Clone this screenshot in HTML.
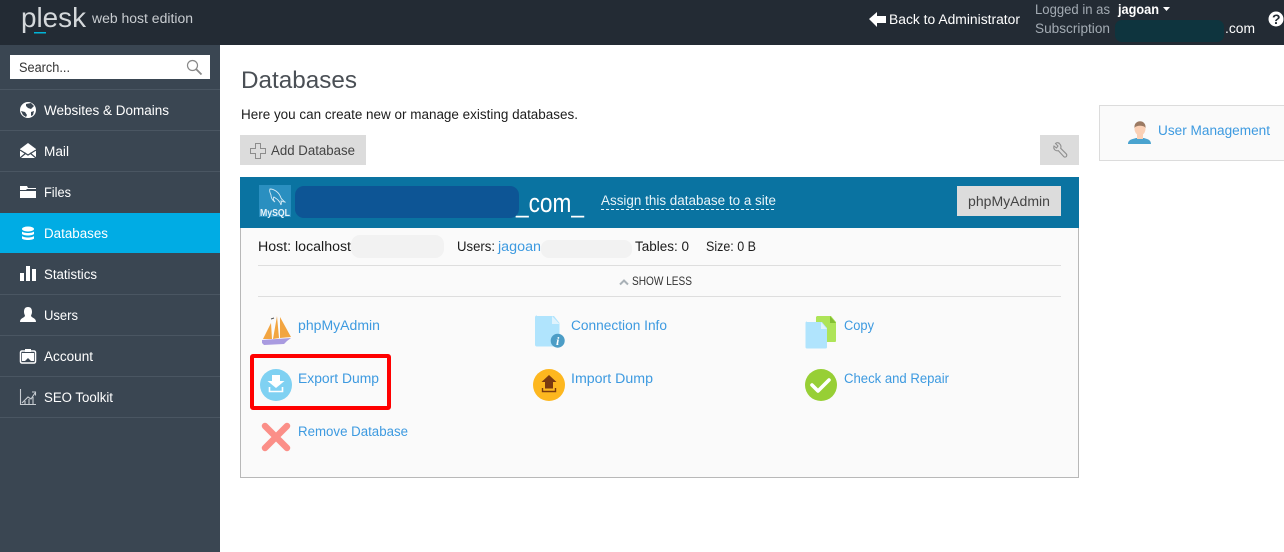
<!DOCTYPE html>
<html><head><meta charset="utf-8"><title>Databases</title>
<style>
html,body{margin:0;padding:0;background:#fff;width:1284px;height:552px;overflow:hidden}
svg{display:block}
text{font-family:"Liberation Sans",sans-serif;font-size:13.5px}
.n{fill:#fff}
.l{fill:#3d9ae0}
.d{fill:#1c1c1c}
</style></head><body>
<svg width="1284" height="552" viewBox="0 0 1284 552" xmlns="http://www.w3.org/2000/svg">
<rect width="1284" height="552" fill="#fff"/>
<!-- header -->
<rect width="1284" height="45" fill="#232b34"/>
<text x="21" y="27" style="font-size:28px" fill="#d4d8db" textLength="65" lengthAdjust="spacingAndGlyphs">plesk</text>
<rect x="34" y="32" width="12" height="1.500" fill="#00b4d8"/>
<text x="92" y="23" fill="#c9cdd1" textLength="101" lengthAdjust="spacingAndGlyphs">web host edition</text>
<path d="M869 19l8-7v4h9v7h-9v4z" fill="#fff"/>
<text x="889" y="24" class="n" textLength="131" lengthAdjust="spacingAndGlyphs">Back to Administrator</text>
<text x="1035" y="14" fill="#a3abb3" textLength="75" lengthAdjust="spacingAndGlyphs">Logged in as</text>
<text x="1118" y="14" class="n" font-weight="bold" textLength="41" lengthAdjust="spacingAndGlyphs">jagoan</text>
<path d="M1163 7h7l-3.500 4z" fill="#fff"/>
<text x="1035" y="33" fill="#a3abb3" textLength="75" lengthAdjust="spacingAndGlyphs">Subscription</text>
<rect x="1115" y="20" width="109" height="22" rx="7" fill="#0e343e"/>
<text x="1225" y="33" class="n" textLength="30" lengthAdjust="spacingAndGlyphs">.com</text>
<circle cx="1276" cy="19" r="7.500" fill="#fff"/>
<text x="1272" y="24" style="font-size:14px" font-weight="bold" fill="#232b34">?</text>
<!-- sidebar -->
<rect y="45" width="220" height="507" fill="#3a4652"/>
<rect x="10" y="55" width="200" height="24" fill="#fff"/>
<text x="19" y="72" fill="#333" textLength="51" lengthAdjust="spacingAndGlyphs">Search...</text>
<circle cx="192.500" cy="65.500" r="5" fill="none" stroke="#888" stroke-width="1.200"/>
<path d="M196 69l5.500 5.500" stroke="#888" stroke-width="1.800"/>
<g fill="#4a5662">
<rect y="89" width="220" height="1"/><rect y="130" width="220" height="1"/><rect y="171" width="220" height="1"/><rect y="294" width="220" height="1"/><rect y="335" width="220" height="1"/><rect y="376" width="220" height="1"/><rect y="417" width="220" height="1"/>
</g>
<rect y="213" width="220" height="40" fill="#00ace4"/>
<text x="44" y="115" class="n" textLength="125" lengthAdjust="spacingAndGlyphs">Websites &amp; Domains</text>
<text x="44" y="156" class="n" textLength="25" lengthAdjust="spacingAndGlyphs">Mail</text>
<text x="44" y="197" class="n" textLength="27" lengthAdjust="spacingAndGlyphs">Files</text>
<text x="44" y="238" class="n" textLength="64" lengthAdjust="spacingAndGlyphs">Databases</text>
<text x="44" y="279" class="n" textLength="53" lengthAdjust="spacingAndGlyphs">Statistics</text>
<text x="44" y="320" class="n" textLength="34" lengthAdjust="spacingAndGlyphs">Users</text>
<text x="44" y="361" class="n" textLength="49" lengthAdjust="spacingAndGlyphs">Account</text>
<text x="44" y="402" class="n" textLength="69" lengthAdjust="spacingAndGlyphs">SEO Toolkit</text>
<!-- sidebar icons -->
<circle cx="28" cy="110" r="8" fill="#fff"/>
<path d="M26 104l5-1 3 3-3 3-3-1-2-2zM21 111l4 1 2 3-1 2-3-2zM31 112l3-1-1 4-2 1z" fill="#3a4652"/>
<path d="M20 149l8-6 8 6v9H20z" fill="#fff"/>
<path d="M20 150l8 5 8-5M20 158l6-5M36 158l-6-5" fill="none" stroke="#3a4652" stroke-width="1.200"/>
<path d="M20 186h7l1 2h8v1H27l-1 1h-6zM20 191h16v7H20z" fill="#fff"/>
<ellipse cx="28" cy="229" rx="6" ry="2.500" fill="#fff"/>
<path d="M22 231.500c2 2 10 2 12 0v2.500c-2 2-10 2-12 0zM22 236c2 2 10 2 12 0v2.500c-1 2-11 2-12 0z" fill="#fff"/>
<path d="M20 273h4v8h-4zM26 266h4v15h-4zM32 269h4v12h-4z" fill="#fff"/>
<path d="M28 307c3 0 4 2 4 5 0 2-1 3-1 4 1 2 5 2 5 6H20c0-4 4-4 5-6 0-1-1-2-1-4 0-3 1-5 4-5z" fill="#fff"/>
<rect x="20.500" y="351" width="15" height="12" rx="1.500" fill="none" stroke="#fff" stroke-width="1.500"/>
<path d="M25 349h6v3h-6zM22 353h12v8h-3l-3-3-3 3h-3z" fill="#fff"/>
<path d="M20.500 389v15.500H36M22 403l6-6 3 2 4-6M32 392h3.500v3.500M25 404v-3M29 404v-5M33 404v-7" fill="none" stroke="#c8cdd2" stroke-width="1.100"/>
<!-- content -->
<text x="241" y="88" fill="#4a4f55" style="font-size:24.500px" textLength="116" lengthAdjust="spacingAndGlyphs">Databases</text>
<text x="241" y="119" class="d" textLength="337" lengthAdjust="spacingAndGlyphs">Here you can create new or manage existing databases.</text>
<rect x="240" y="135" width="126" height="30" fill="#dcdcdc"/>
<path d="M255.500 143.500h5v5h5v5h-5v5h-5v-5h-5v-5h5z" fill="none" stroke="#8c8c8c"/>
<text x="271" y="155" fill="#444" textLength="84" lengthAdjust="spacingAndGlyphs">Add Database</text>
<rect x="1040" y="135" width="39" height="30" fill="#dcdcdc"/>
<path transform="translate(5 0)" d="M1054 143c-1.500-.5-3 0-3.500.5l2.500 2.500-1.500 2-2.500-2c-.5 1.500 0 3 1 4 1 .8 2 1 3.300.6l5.500 6c1 1 2.500.2 2.700-.3.500-1 .2-2-.3-2.500l-5.500-5.500c.5-1.500.2-3-.7-4-.3-.4-.6-.6-1-.8z" fill="none" stroke="#8f8f8f" stroke-width="1.100"/>
<!-- db panel -->
<rect x="240.500" y="200" width="838" height="277.500" fill="#fafafa" stroke="#b8b8b8"/>
<rect x="240" y="177" width="839" height="51" fill="#0a73a1"/>
<rect x="259" y="185" width="32" height="32" fill="#2a8fc0"/>
<path d="M270 189c4 0 9 3 11 9 1 2 3 3 4 4-2 0-3-1-4-1 1 2 0 3 0 4-1-4-4-6-7-8-1 0-1 3 1 5-3-2-4-5-4-7-1-2-2-4-1-6z" fill="none" stroke="#d5eaf4" stroke-width=".9"/>
<text x="260" y="216" fill="#e6f3f9" font-weight="bold" style="font-size:10.500px" textLength="30" lengthAdjust="spacingAndGlyphs">MySQL</text>
<text x="516" y="212" class="n" style="font-size:27px" textLength="68" lengthAdjust="spacingAndGlyphs">_com_</text>
<rect x="295" y="186" width="224" height="32" rx="9" fill="#0d5595"/>
<text x="601" y="205" fill="#e8f4f9" textLength="175" lengthAdjust="spacingAndGlyphs">Assign this database to a site</text>
<path d="M601 209.500h175" stroke="#e8f4f9" stroke-dasharray="3 2"/>
<rect x="957" y="186" width="104" height="30" fill="#dcdcdc"/>
<text x="968" y="206" fill="#444" textLength="82" lengthAdjust="spacingAndGlyphs">phpMyAdmin</text>
<text x="258" y="251" class="d" textLength="93" lengthAdjust="spacingAndGlyphs">Host: localhost</text>
<rect x="351" y="235" width="93" height="23" rx="9" fill="#f2f2f2"/>
<text x="457" y="251" class="d" textLength="38" lengthAdjust="spacingAndGlyphs">Users:</text>
<text x="498" y="251" class="l" textLength="43" lengthAdjust="spacingAndGlyphs">jagoan</text>
<rect x="541" y="240" width="91" height="18" rx="8" fill="#f2f2f2"/>
<text x="635" y="251" class="d" textLength="54" lengthAdjust="spacingAndGlyphs">Tables: 0</text>
<text x="706" y="251" class="d" textLength="50" lengthAdjust="spacingAndGlyphs">Size: 0 B</text>
<rect x="258" y="265" width="803" height="1" fill="#dedede"/>
<rect x="258" y="296" width="803" height="1" fill="#dedede"/>
<path d="M620 284.500l4-4 4 4" fill="none" stroke="#a9b1b7" stroke-width="2"/>
<text x="632" y="285" fill="#333" style="font-size:12px" textLength="60" lengthAdjust="spacingAndGlyphs">SHOW LESS</text>
<!-- action links -->
<text x="298" y="330" class="l" textLength="82" lengthAdjust="spacingAndGlyphs">phpMyAdmin</text>
<text x="298" y="383" class="l" textLength="81" lengthAdjust="spacingAndGlyphs">Export Dump</text>
<text x="298" y="436" class="l" textLength="110" lengthAdjust="spacingAndGlyphs">Remove Database</text>
<text x="571" y="330" class="l" textLength="96" lengthAdjust="spacingAndGlyphs">Connection Info</text>
<text x="571" y="383" class="l" textLength="82" lengthAdjust="spacingAndGlyphs">Import Dump</text>
<text x="844" y="330" class="l" textLength="30" lengthAdjust="spacingAndGlyphs">Copy</text>
<text x="844" y="383" class="l" textLength="105" lengthAdjust="spacingAndGlyphs">Check and Repair</text>
<!-- phpMyAdmin sails -->
<path d="M263 339L271 323 272 339zM273 339L277 316 279 338zM280 317L291 337 280 338z" fill="#f2a541"/>
<path d="M262 340l29-2-4 3-3 3-20 1-2-2z" fill="#a99be0"/>
<path d="M271 319l3-1" stroke="#555"/>
<!-- export -->
<circle cx="276" cy="385" r="16" fill="#7fd1f2"/>
<path d="M272 375h8v6h4.500l-8.500 7-8.500-7h4.500z" fill="#fff"/>
<path d="M269.500 387v4.500h13v-4.500" fill="none" stroke="#fff" stroke-width="1.600"/>
<rect x="252" y="356" width="137" height="52" rx="1" fill="none" stroke="#f00" stroke-width="4"/>
<!-- remove -->
<path d="M265 426l22 22M287 426l-22 22" stroke="#fb8f88" stroke-width="6.500" stroke-linecap="round"/>
<!-- conn info -->
<path d="M537 316h17l5.500 7v22a1.500 1.500 0 0 1-1.500 1.500H537a2 2 0 0 1-2-2v-27a2 2 0 0 1 2-2z" fill="#b0e4fd"/>
<path d="M552 316l7.500 8h-7.500z" fill="#dff3fd"/>
<circle cx="557.700" cy="340.700" r="7" fill="#4c9dc6"/>
<text x="556" y="345" class="n" style="font-size:12px;font-style:italic;font-family:'Liberation Serif',serif" font-weight="bold">i</text>
<!-- import -->
<circle cx="549" cy="385" r="16" fill="#fdb71f"/>
<path d="M549 375l7.500 7h-3.500v6.500h-8v-6.500h-3.500z" fill="#7a3a10"/>
<path d="M542.500 388v3.500h13v-3.500" fill="none" stroke="#7a3a10" stroke-width="1.400"/>
<!-- copy -->
<path d="M817 316h14l5 6v19a1 1 0 0 1-1 1h-18a1 1 0 0 1-1-1v-24z" fill="#aee458"/>
<path d="M830 316l6 7h-6z" fill="#83bf33"/>
<path d="M807 322h15l5 6v19a1.500 1.500 0 0 1-1.500 1.500H807a1.500 1.500 0 0 1-1.500-1.500v-24a1.500 1.500 0 0 1 1.500-1.500z" fill="#b0e4fd"/>
<path d="M821 322l6 7h-6z" fill="#dff3fd"/>
<!-- check -->
<circle cx="821" cy="385" r="16" fill="#97cf35"/>
<path d="M812 385l6 6 11-11" fill="none" stroke="#fff" stroke-width="3.600" stroke-linecap="round" stroke-linejoin="round"/>
<!-- user mgmt -->
<rect x="1099.500" y="105.500" width="190" height="55" fill="#fafafa" stroke="#dcdcdc"/>
<path d="M1128 144c0-5 6-5 8-6h8c2 1 7 1 7 6z" fill="#4aa3cf"/>
<ellipse cx="1140" cy="128.500" rx="5.500" ry="7" fill="#fbd0b5"/>
<path d="M1134.500 128c-1-9 12-9 11 0-1-3-10-3-11 0z" fill="#9b7a63"/>
<rect x="1137" y="134" width="6" height="5" fill="#fbd0b5"/>
<text x="1158" y="135" class="l" textLength="112" lengthAdjust="spacingAndGlyphs">User Management</text>
</svg>
</body></html>
